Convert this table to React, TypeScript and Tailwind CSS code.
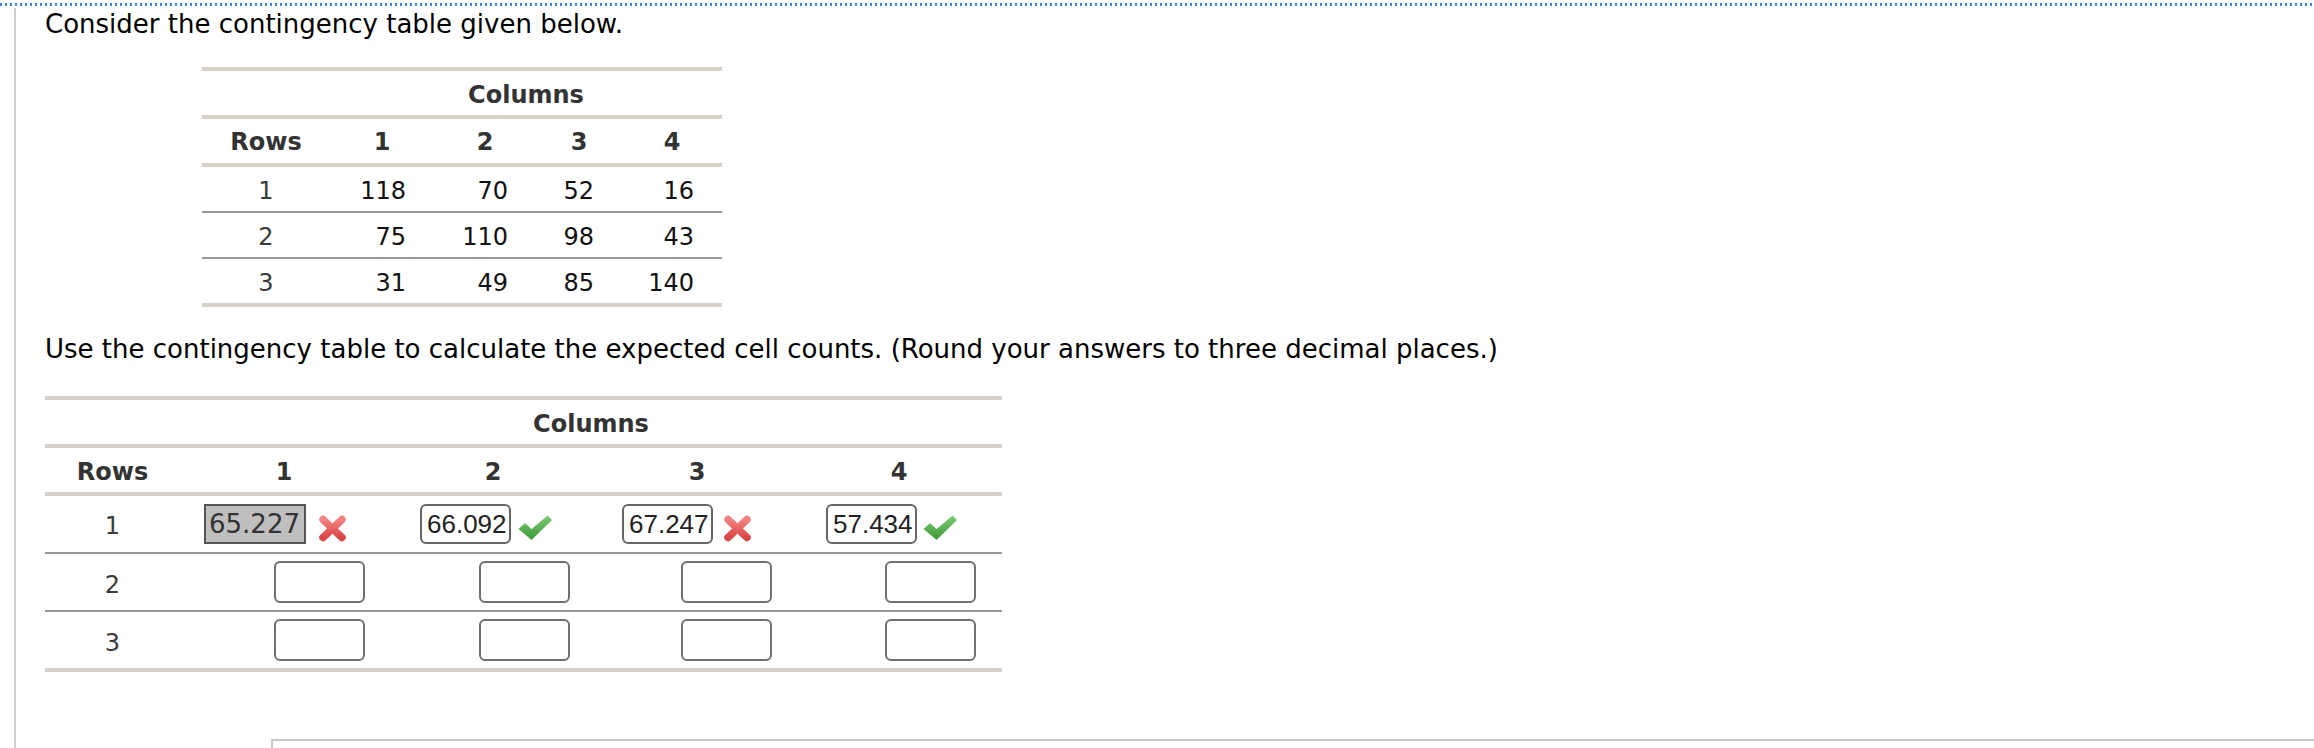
import React from "react";

function XIcon() {
  return (
    <svg width="29" height="27" viewBox="0 0 29 27" className="block">
      <defs>
        <linearGradient id="xg" x1="0" y1="0" x2="0" y2="1">
          <stop offset="0" stopColor="#f38383" />
          <stop offset="1" stopColor="#d94646" />
        </linearGradient>
      </defs>
      <path d="M5 4.5 L24 22.5 M24 4.5 L5 22.5" stroke="url(#xg)" strokeWidth="7.5" strokeLinecap="round" fill="none" />
    </svg>
  );
}

function CheckIcon() {
  return (
    <svg width="34" height="26" viewBox="0 0 34 26" className="block">
      <defs>
        <linearGradient id="cg" x1="0" y1="0" x2="0" y2="1">
          <stop offset="0" stopColor="#7cc874" />
          <stop offset="1" stopColor="#3f9a3a" />
        </linearGradient>
      </defs>
      <path
        d="M1.5 14 L7 9 L13.5 15 L29.5 1.5 L33 5 L13.5 24 Z"
        fill="url(#cg)"
        stroke="url(#cg)"
        strokeWidth="1.5"
        strokeLinejoin="round"
      />
    </svg>
  );
}

function Box({ value, kind }: { value?: string; kind: "gray" | "row1" | "empty" }) {
  if (kind === "gray") {
    return (
      <div className="w-[102px] h-[40px] border-2 border-[#555555] bg-[#bfbfbf] flex items-center pl-[3px] font-['DejaVu_Sans',Verdana,sans-serif] text-[26px] text-[#333333] overflow-hidden whitespace-nowrap">
        {value}
      </div>
    );
  }
  if (kind === "row1") {
    return (
      <div className="w-[91px] h-[40px] border-2 border-[#666666] rounded-[6px] bg-white flex items-center pl-[5px] font-['Liberation_Sans',Arial,sans-serif] text-[26px] text-[#222222] whitespace-nowrap">
        {value}
      </div>
    );
  }
  return <div className="w-[91px] h-[42px] border-2 border-[#707070] rounded-[6px] bg-white" />;
}

const t1Rows = [
  ["118", "70", "52", "16"],
  ["75", "110", "98", "43"],
  ["31", "49", "85", "140"],
];

function Beige() {
  return <div className="h-[4px] bg-[#d6d2c9]" />;
}
function GrayLine() {
  return <div className="h-[2px] bg-[#999999]" />;
}

function Table1() {
  return (
    <div className="ml-[157px] mt-[28px] w-[520px] text-[24px]">
      <Beige />
      <div className="grid grid-cols-[128px_392px] h-[44px] pt-[4px] items-center font-bold text-[#333333]">
        <div />
        <div className="text-center">Columns</div>
      </div>
      <Beige />
      <div className="grid grid-cols-[128px_104px_102px_86px_100px] h-[44px] pt-[2px] items-center font-bold text-[#333333] text-center">
        <div>Rows</div>
        <div>1</div>
        <div>2</div>
        <div>3</div>
        <div>4</div>
      </div>
      <Beige />
      {t1Rows.map((r, i) => (
        <React.Fragment key={i}>
          <div className="grid grid-cols-[128px_104px_102px_86px_100px] h-[44px] pt-[4px] items-center">
            <div className="text-center text-[#3a3a3a]">{i + 1}</div>
            {r.map((v, j) => (
              <div key={j} className="text-right pr-[28px] text-[#111111]">
                {v}
              </div>
            ))}
          </div>
          {i < 2 ? <GrayLine /> : <Beige />}
        </React.Fragment>
      ))}
    </div>
  );
}

function Table2() {
  return (
    <div className="mt-[32px] w-[957px] text-[24px]">
      <Beige />
      <div className="grid grid-cols-[135px_822px] h-[44px] pt-[3px] items-center font-bold text-[#333333]">
        <div />
        <div className="text-center">Columns</div>
      </div>
      <Beige />
      <div className="grid grid-cols-[135px_208px_210px_198px_206px] h-[44px] pt-[3px] items-center font-bold text-[#333333] text-center">
        <div>Rows</div>
        <div>1</div>
        <div>2</div>
        <div>3</div>
        <div>4</div>
      </div>
      <Beige />
      {/* row 1 */}
      <div className="grid grid-cols-[135px_208px_210px_198px_206px] h-[56px] items-center">
        <div className="text-center text-[#3a3a3a] pt-[4px]">1</div>
        <div className="flex items-center justify-end pr-[23px]">
          <Box kind="gray" value="65.227" />
          <div className="w-[59px] pl-[12px] mt-[8px]">
            <XIcon />
          </div>
        </div>
        <div className="flex items-center justify-end pr-[28px]">
          <Box kind="row1" value="66.092" />
          <div className="w-[59px] pl-[7px] mt-[8px]">
            <CheckIcon />
          </div>
        </div>
        <div className="flex items-center justify-end pr-[24px]">
          <Box kind="row1" value="67.247" />
          <div className="w-[59px] pl-[10px] mt-[8px]">
            <XIcon />
          </div>
        </div>
        <div className="flex items-center justify-end pr-[26px]">
          <Box kind="row1" value="57.434" />
          <div className="w-[59px] pl-[6px] mt-[8px]">
            <CheckIcon />
          </div>
        </div>
      </div>
      <GrayLine />
      {[2, 3].map((n) => (
        <React.Fragment key={n}>
          <div className="grid grid-cols-[135px_208px_210px_198px_206px] h-[56px] items-center">
            <div className="text-center text-[#3a3a3a] pt-[5px]">{n}</div>
            <div className="flex justify-end pr-[23px]">
              <Box kind="empty" />
            </div>
            <div className="flex justify-end pr-[28px]">
              <Box kind="empty" />
            </div>
            <div className="flex justify-end pr-[24px]">
              <Box kind="empty" />
            </div>
            <div className="flex justify-end pr-[26px]">
              <Box kind="empty" />
            </div>
          </div>
          {n === 2 ? <GrayLine /> : <Beige />}
        </React.Fragment>
      ))}
    </div>
  );
}

export default function App() {
  return (
    <div className="h-[748px] w-full overflow-hidden bg-white text-black font-['DejaVu_Sans',Verdana,sans-serif]">
      <div className="pt-[3px]">
        <div className="h-[3px] bg-[repeating-linear-gradient(90deg,#3c84dc_0px,#3c84dc_2.5px,transparent_2.5px,transparent_5px)]" />
      </div>
      <div className="ml-[14px] mt-[2px] h-[740px] border-l-2 border-[#cfcfcf] pl-[29px]">
        <p className="pt-[1px] text-[26px] leading-[30px]">Consider the contingency table given below.</p>
        <Table1 />
        <p className="mt-[27px] text-[26px] leading-[30px]">
          Use the contingency table to calculate the expected cell counts. (Round your answers to three decimal places.)
        </p>
        <Table2 />
        <div className="ml-[226px] mt-[67px] h-[40px] border-l-2 border-t-2 border-[#c8c8c8]" />
      </div>
    </div>
  );
}
